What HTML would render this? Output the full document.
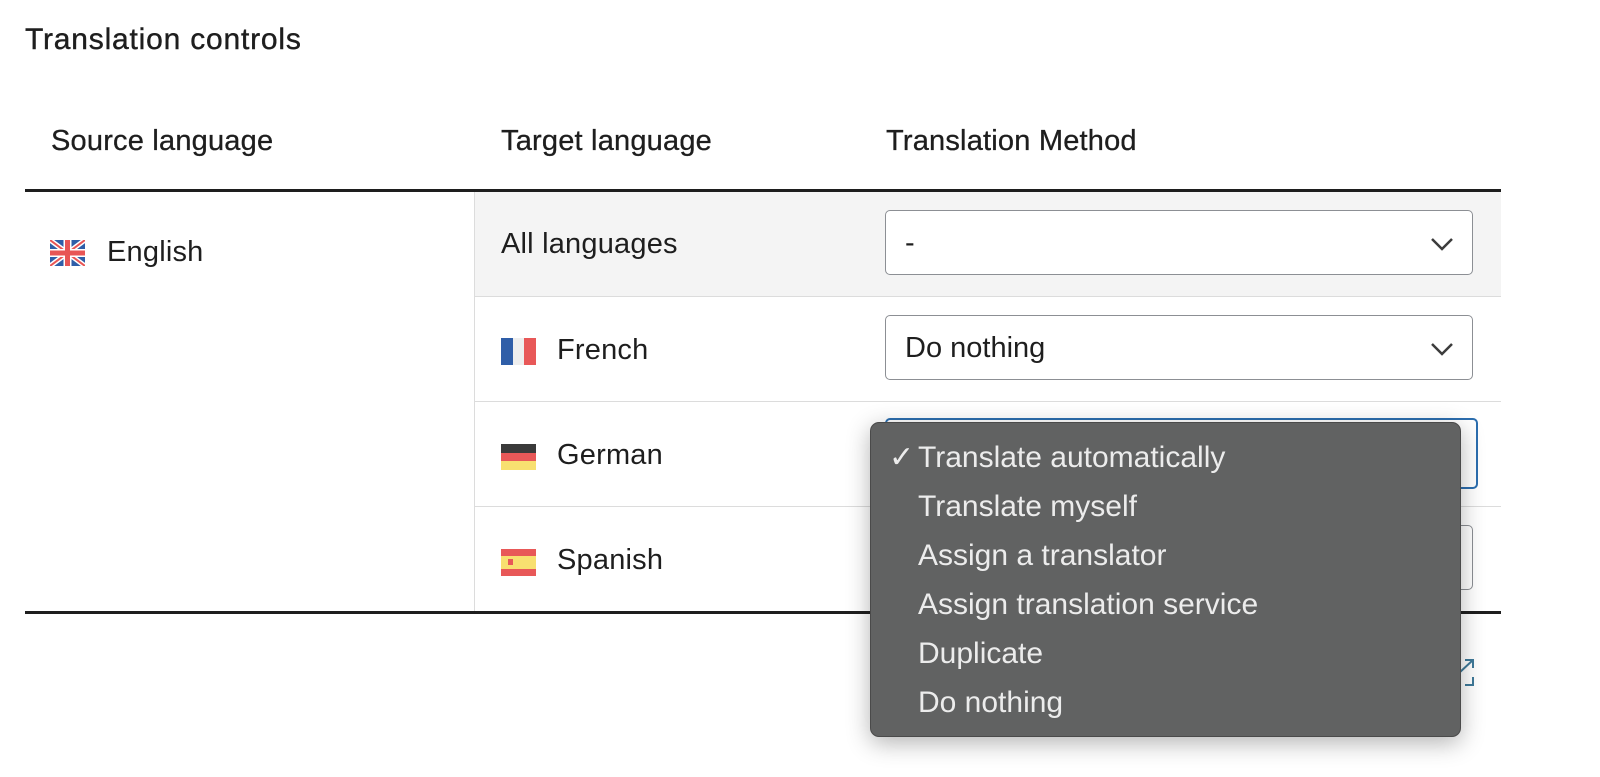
<!DOCTYPE html>
<html><head><style>
body{margin:0;width:1600px;height:777px;background:#fff;font-family:"Liberation Sans",sans-serif;color:#1e1e1e;position:relative;overflow:hidden}
.a{position:absolute;white-space:nowrap}
.t{font-size:29px;line-height:30px;letter-spacing:0.2px}
.sel{position:absolute;left:885px;width:588px;height:65px;border:1.5px solid #8c8f94;border-radius:5px;background:#fff;box-sizing:border-box}
.sel span{position:absolute;left:19px;top:17px;font-size:29px;line-height:30px}
.chev{position:absolute;right:18px;top:26px}
.menu{position:absolute;left:870px;top:422px;width:591px;height:315px;background:#616262;border:1px solid #4a4a4a;border-radius:9px;box-shadow:0 6px 24px rgba(0,0,0,.3);box-sizing:border-box}
.menu div{position:absolute;left:47px;font-size:30px;line-height:32px;color:#ececec}
</style></head><body>
<div class="a" style="left:25px;top:24px;font-size:30px;line-height:32px;letter-spacing:0.8px;-webkit-text-stroke:0.4px #1e1e1e">Translation controls</div>
<div class="a t" style="left:51px;top:126px;-webkit-text-stroke:0.3px #1e1e1e">Source language</div>
<div class="a t" style="left:501px;top:126px;-webkit-text-stroke:0.3px #1e1e1e">Target language</div>
<div class="a t" style="left:886px;top:126px;-webkit-text-stroke:0.3px #1e1e1e">Translation Method</div>
<div class="a" style="left:25px;top:189px;width:1476px;height:3px;background:#1e1e1e"></div>
<div class="a" style="left:474px;top:192px;width:1027px;height:104px;background:#f4f4f4"></div>
<div class="a" style="left:474px;top:192px;width:1px;height:419px;background:#dcdcdc"></div>
<div class="a" style="left:474px;top:296px;width:1027px;height:1px;background:#dcdcdc"></div>
<div class="a" style="left:474px;top:401px;width:1027px;height:1px;background:#dcdcdc"></div>
<div class="a" style="left:474px;top:506px;width:1027px;height:1px;background:#dcdcdc"></div>
<div class="a" style="left:25px;top:611px;width:1476px;height:3px;background:#1e1e1e"></div>
<svg class="a" style="left:50px;top:240px" width="35" height="26" viewBox="0 0 35 26"><rect width="35" height="26" fill="#2f5ea8"/><path d="M0 0L35 26M35 0L0 26" stroke="#fff" stroke-width="5"/><path d="M0 0L35 26M35 0L0 26" stroke="#e85555" stroke-width="2"/><path d="M17.5 0V26M0 13H35" stroke="#fff" stroke-width="8"/><path d="M17.5 0V26M0 13H35" stroke="#e85555" stroke-width="5"/></svg>
<div class="a t" style="left:107px;top:237px">English</div>
<div class="a t" style="left:501px;top:229px">All languages</div>
<svg class="a" style="left:501px;top:338px" width="35" height="27"><rect width="12" height="27" fill="#2f5ea8"/><rect x="12" width="11" height="27" fill="#eee"/><rect x="23" width="12" height="27" fill="#e85858"/></svg>
<div class="a t" style="left:557px;top:335px">French</div>
<svg class="a" style="left:501px;top:444px" width="35" height="26"><rect width="35" height="9" fill="#3a3a3a"/><rect y="9" width="35" height="8" fill="#e85858"/><rect y="17" width="35" height="9" fill="#f8e070"/></svg>
<div class="a t" style="left:557px;top:440px">German</div>
<svg class="a" style="left:501px;top:549px" width="35" height="27"><rect width="35" height="27" fill="#e85858"/><rect y="7" width="35" height="13" fill="#f8e070"/><rect x="7" y="10" width="5" height="6" fill="#e85858"/></svg>
<div class="a t" style="left:557px;top:545px">Spanish</div>
<div class="sel" style="top:210px"><span>-</span><svg class="chev" width="24" height="14"><path d="M2 2L12 12L22 2" fill="none" stroke="#3c3c3c" stroke-width="2.5"/></svg></div>
<div class="sel" style="top:315px"><span>Do nothing</span><svg class="chev" width="24" height="14"><path d="M2 2L12 12L22 2" fill="none" stroke="#3c3c3c" stroke-width="2.5"/></svg></div>
<div class="sel" style="top:418px;height:71px;width:593px;border:2px solid #2c6eaf"></div>
<div class="sel" style="top:525px"></div>
<svg class="a" style="left:1455px;top:657px" width="24" height="30"><path d="M4 16L18 3M10 3H18V11" fill="none" stroke="#3f7a9a" stroke-width="2"/><path d="M18 20V28H10" fill="none" stroke="#3f7a9a" stroke-width="2"/></svg>
<div class="menu">
<div style="left:18px;top:19px">✓</div>
<div style="top:19px">Translate automatically</div>
<div style="top:68px">Translate myself</div>
<div style="top:117px">Assign a translator</div>
<div style="top:166px">Assign translation service</div>
<div style="top:215px">Duplicate</div>
<div style="top:264px">Do nothing</div>
</div>
</body></html>
